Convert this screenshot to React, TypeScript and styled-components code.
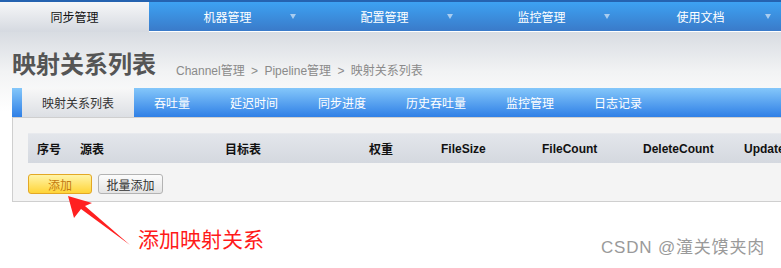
import React from "react";
import styled, { createGlobalStyle } from "styled-components";

const Global = createGlobalStyle`
  html, body { margin: 0; padding: 0; background: #fff; }
  body {
    width: 781px; height: 268px; overflow: hidden;
    font-family: "Liberation Sans", "Noto Sans CJK SC", sans-serif;
    font-size: 12px;
  }
`;

const Page = styled.div`
  position: relative;
  width: 781px;
  height: 268px;
  overflow: hidden;
`;

const NavBar = styled.div`
  display: flex;
  border-top: 2px solid #2563b0;
  height: 30px;
  background: linear-gradient(#3da2f2, #3a79c8);
`;

const NavItem = styled.div<{ $active?: boolean; $w: number }>`
  width: ${(p) => p.$w}px;
  flex: none;
  display: grid;
  grid-template-columns: 1fr auto 1fr;
  align-items: center;
  color: ${(p) => (p.$active ? "#111" : "#fff")};
  font-size: 12px;
  background: ${(p) => (p.$active ? "linear-gradient(#f6f7f8, #d6dae1)" : "transparent")};
  border-bottom: 1px solid ${(p) => (p.$active ? "#d6dae1" : "#fff")};
  span { grid-column: 2; }
`;

const Caret = styled.i`
  grid-column: 3;
  justify-self: end;
  margin-right: 10px;
  width: 0;
  height: 0;
  border-left: 3.5px solid transparent;
  border-right: 3.5px solid transparent;
  border-top: 5px solid #a9cdf0;
`;

const Body = styled.div`
  background: linear-gradient(#d8dce2 0px, #f2f3f4 40px, #ffffff 80px);
`;

const Header = styled.div`
  height: 56px;
  display: flex;
  align-items: flex-end;
  padding: 0 0 8px 12px;
  box-sizing: border-box;
`;

const Title = styled.h1`
  margin: 0;
  font-size: 24px;
  line-height: 30px;
  font-weight: bold;
  color: #555;
`;

const Crumbs = styled.div`
  margin: 0 0 1px 20px;
  color: #8a8a8a;
  font-size: 12px;
  line-height: 16px;
  word-spacing: 3px;
`;

const TabBar = styled.div`
  margin-left: 12px;
  height: 29px;
  display: flex;
  padding-left: 10px;
  background: linear-gradient(#84c7fa, #2f7fe6);
`;

const Tab = styled.div<{ $active?: boolean }>`
  padding: 0 20px;
  display: flex;
  align-items: center;
  font-size: 12px;
  color: ${(p) => (p.$active ? "#333" : "#fff")};
  background: ${(p) => (p.$active ? "linear-gradient(#f8f8f8, #dcdfe4)" : "transparent")};
`;

const Panel = styled.div`
  margin-left: 12px;
  margin-right: -20px;
  border: 1px solid #cfcfcf;
  background: #f4f4f4;
  padding: 15px 0 7px 15px;
`;

const TableHead = styled.div`
  display: grid;
  grid-template-columns: 43px 145px 144px 72px 101px 101px 101px 1fr;
  height: 30px;
  box-sizing: border-box;
  border-top: 1px solid #e8eaee;
  background: linear-gradient(#e3e6eb, #d4d8df);
  align-items: center;
  margin-bottom: 11px;
`;

const Th = styled.div`
  padding-left: 9px;
  font-weight: bold;
  font-size: 12px;
  color: #111;
  white-space: nowrap;
`;

const Buttons = styled.div`
  display: flex;
  gap: 6px;
`;

const Btn = styled.button<{ $primary?: boolean }>`
  height: 20px;
  width: ${(p) => (p.$primary ? 64 : 65)}px;
  padding: 0;
  font-family: inherit;
  font-size: 12px;
  border-radius: 3px;
  border: 1px solid ${(p) => (p.$primary ? "#e3a825" : "#b3b3b3")};
  color: ${(p) => (p.$primary ? "#c47a12" : "#333")};
  background: ${(p) =>
    p.$primary ? "linear-gradient(#fff4a8, #ffd437)" : "linear-gradient(#fcfcfc, #e4e4e4)"};
`;

const Note = styled.div`
  display: flex;
  align-items: flex-start;
  justify-content: space-between;
  margin-top: 24px;
  padding-left: 138px;
  padding-right: 16px;
`;

const NoteText = styled.span`
  color: #ff1a1a;
  font-size: 21px;
  line-height: 24px;
  font-family: "Noto Sans CJK SC", sans-serif;
`;

const Watermark = styled.span`
  color: #9a9a9a;
  font-size: 17px;
  line-height: 20px;
  margin-top: 12px;
  letter-spacing: 0.8px;
`;

const ArrowSvg = styled.svg`
  position: absolute;
  left: 0;
  top: 0;
  pointer-events: none;
`;

const navs = [
  { t: "同步管理", w: 149, a: true },
  { t: "机器管理", w: 157 },
  { t: "配置管理", w: 157 },
  { t: "监控管理", w: 157 },
  { t: "使用文档", w: 161 },
];

const tabs = ["映射关系列表", "吞吐量", "延迟时间", "同步进度", "历史吞吐量", "监控管理", "日志记录"];
const cols = ["序号", "源表", "目标表", "权重", "FileSize", "FileCount", "DeleteCount", "UpdateCount"];

export default function App() {
  return (
    <Page>
      <Global />
      <NavBar>
        {navs.map((n) => (
          <NavItem key={n.t} $active={n.a} $w={n.w}>
            <span>{n.t}</span>
            {!n.a && <Caret />}
          </NavItem>
        ))}
      </NavBar>
      <Body>
        <Header>
          <Title>映射关系列表</Title>
          <Crumbs>Channel管理 &gt; Pipeline管理 &gt; 映射关系列表</Crumbs>
        </Header>
        <TabBar>
          {tabs.map((t, i) => (
            <Tab key={t} $active={i === 0}>{t}</Tab>
          ))}
        </TabBar>
        <Panel>
          <TableHead>
            {cols.map((c) => (
              <Th key={c}>{c}</Th>
            ))}
          </TableHead>
          <Buttons>
            <Btn $primary>添加</Btn>
            <Btn>批量添加</Btn>
          </Buttons>
        </Panel>
      </Body>
      <Note>
        <NoteText>添加映射关系</NoteText>
        <Watermark>CSDN @潼关馍夹肉</Watermark>
      </Note>
      <ArrowSvg width="781" height="268" viewBox="0 0 781 268">
        <polygon
          points="68,196 92,203 85,206 130,245 81,209 74,218"
          fill="#ff2020"
        />
      </ArrowSvg>
    </Page>
  );
}
